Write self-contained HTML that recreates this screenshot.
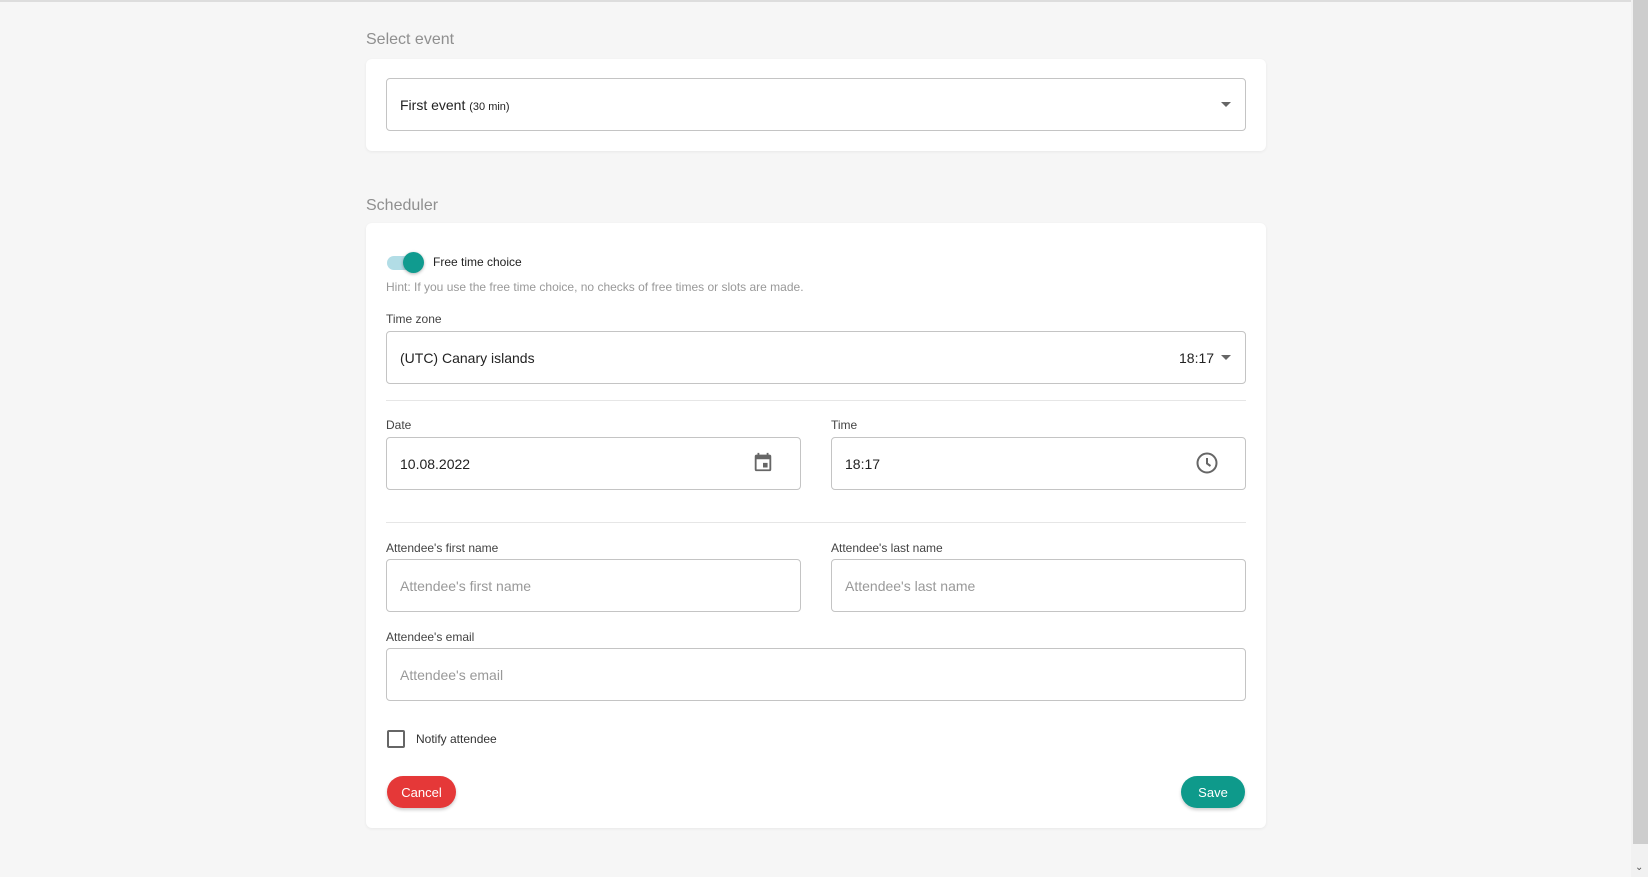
<!DOCTYPE html>
<html><head><meta charset="utf-8"><style>
*{box-sizing:border-box;margin:0;padding:0}
body{width:1648px;height:877px;overflow:hidden;background:#f6f6f6;font-family:"Liberation Sans",Arial,sans-serif;position:relative;color:#222}
.topline{position:absolute;left:0;top:0;width:1631px;height:2px;background:#ddd}
.sb{position:absolute;right:0;top:0;width:17px;height:877px;background:#f1f1f1}
.sb .th{position:absolute;left:2px;top:0;width:15px;height:844px;background:#cdcdcd}
.a{position:absolute}
.title{font-size:16px;color:#8f8f8f}
.card{background:#fff;border-radius:6px;box-shadow:0 1px 3px rgba(0,0,0,.06)}
.box{border:1px solid #c4c4c4;border-radius:4px;background:#fff;font-size:14px;color:#222;padding-left:13px;display:flex;align-items:center}
.ph{color:#999}
.lbl{font-size:12px;color:#444}
.hr{height:1px;background:#e6e6e6}
.caret{position:absolute;width:0;height:0;border-left:5px solid transparent;border-right:5px solid transparent;border-top:5px solid #666}
.btn{border-radius:16px;color:#fff;font-size:13px;display:flex;align-items:center;justify-content:center;box-shadow:0 2px 3px rgba(0,0,0,.2)}
</style></head><body>
<div class="topline"></div>
<div class="sb"><div class="th"></div><div class="a" style="left:4px;bottom:4px;font-size:10px;color:#555">&#8964;</div></div>

<div class="a title" style="left:366px;top:31px">Select event</div>
<div class="a card" style="left:366px;top:59px;width:900px;height:92px"></div>
<div class="a box" style="left:386px;top:78px;width:860px;height:53px"><span>First event <span style="font-size:11px">(30 min)</span></span></div>
<div class="caret" style="left:1221px;top:102px"></div>

<div class="a title" style="left:366px;top:197px">Scheduler</div>
<div class="a card" style="left:366px;top:223px;width:900px;height:605px"></div>

<div class="a" style="left:387px;top:256px;width:34px;height:14px;border-radius:7px;background:#b2dde6"></div>
<div class="a" style="left:403px;top:252px;width:21px;height:21px;border-radius:50%;background:#109b8f;box-shadow:0 1px 3px rgba(0,0,0,.3)"></div>
<div class="a" style="left:433px;top:255px;font-size:12px;color:#222">Free time choice</div>
<div class="a" style="left:386px;top:280px;font-size:12px;color:#999">Hint: If you use the free time choice, no checks of free times or slots are made.</div>

<div class="a lbl" style="left:386px;top:312px">Time zone</div>
<div class="a box" style="left:386px;top:331px;width:860px;height:53px">(UTC) Canary islands</div>
<div class="a" style="left:1179px;top:350px;font-size:14px">18:17</div>
<div class="caret" style="left:1221px;top:355px"></div>
<div class="a hr" style="left:386px;top:400px;width:860px"></div>

<div class="a lbl" style="left:386px;top:418px">Date</div>
<div class="a box" style="left:386px;top:437px;width:415px;height:53px">10.08.2022</div>
<svg class="a" style="left:752px;top:451px" width="22" height="22" viewBox="0 0 24 24"><path fill="#666" d="M19 4h-1V2h-2v2H8V2H6v2H5a2 2 0 0 0-2 2v14a2 2 0 0 0 2 2h14a2 2 0 0 0 2-2V6a2 2 0 0 0-2-2zm0 16H5V9h14v11zM12 13h5v5h-5z"/></svg>
<div class="a lbl" style="left:831px;top:418px">Time</div>
<div class="a box" style="left:831px;top:437px;width:415px;height:53px">18:17</div>
<svg class="a" style="left:1195px;top:451px" width="24" height="24" viewBox="0 0 24 24"><circle cx="12" cy="12" r="9.5" fill="none" stroke="#666" stroke-width="2"/><path d="M12 7v5.5l3.5 2.5" fill="none" stroke="#666" stroke-width="2"/></svg>
<div class="a hr" style="left:386px;top:522px;width:860px"></div>

<div class="a lbl" style="left:386px;top:541px">Attendee's first name</div>
<div class="a box" style="left:386px;top:559px;width:415px;height:53px"><span class="ph">Attendee's first name</span></div>
<div class="a lbl" style="left:831px;top:541px">Attendee's last name</div>
<div class="a box" style="left:831px;top:559px;width:415px;height:53px"><span class="ph">Attendee's last name</span></div>
<div class="a lbl" style="left:386px;top:630px">Attendee's email</div>
<div class="a box" style="left:386px;top:648px;width:860px;height:53px"><span class="ph">Attendee's email</span></div>

<div class="a" style="left:387px;top:730px;width:18px;height:18px;border:2px solid #666;border-radius:2px"></div>
<div class="a" style="left:416px;top:732px;font-size:12px;color:#333">Notify attendee</div>

<div class="a btn" style="left:387px;top:776px;width:69px;height:32px;background:#e53838">Cancel</div>
<div class="a btn" style="left:1181px;top:776px;width:64px;height:32px;background:#0e9a8b">Save</div>
</body></html>
